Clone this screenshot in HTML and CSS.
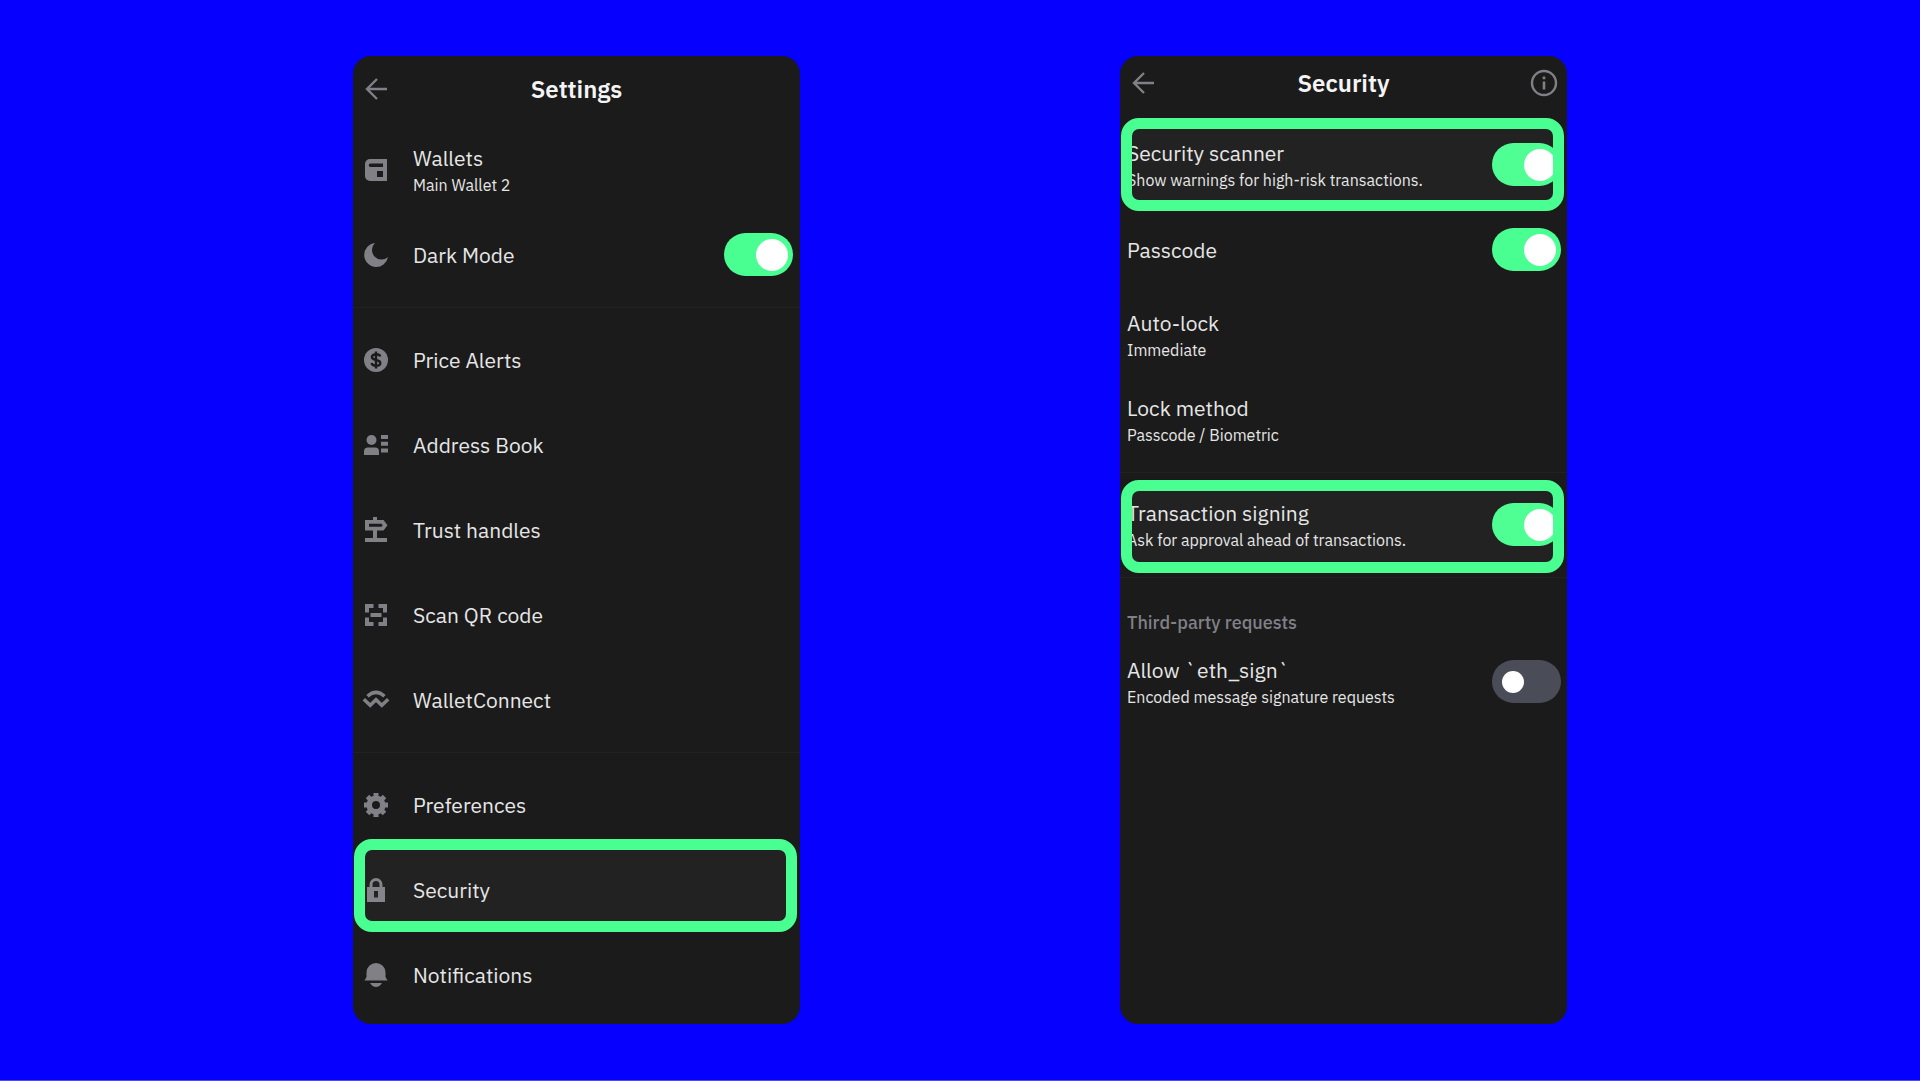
FILE: index.html
```html
<!DOCTYPE html>
<html lang="en">
<head>
<meta charset="utf-8">
<meta name="viewport" content="width=device-width, initial-scale=1">
<title>Wallet settings</title>
<link rel="stylesheet" href="styles.css">
</head>
<body>
<main class="stage">
  <section class="panel" aria-labelledby="settings-title">
    <header class="bar bar-tall">
      <button class="icon-button" type="button" aria-label="Back">
        <svg class="icon" viewBox="0 0 26 26"><path class="line" d="M24 13H4M14 3 4 13l10 10"/></svg>
      </button>
      <h1 class="title" id="settings-title">Settings</h1>
    </header>
    <ul class="list">
      <li class="row">
        <svg class="icon" viewBox="0 0 26 26"><path fill-rule="evenodd" d="M7 2h17v22H7a5 5 0 0 1-5-5V7a5 5 0 0 1 5-5zM7.500 6.500a1.500 1.500 0 0 0 0 3.500h12.500V6.500zM14 14v6h6v-6z"/></svg>
        <a class="text" href="#wallets"><span class="label">Wallets</span><span class="note">Main Wallet 2</span></a>
      </li>
      <li class="row">
        <svg class="icon" viewBox="0 0 26 26"><path d="M12 1A12 12 0 1 0 25 15 9.500 9.500 0 0 1 12 1z"/></svg>
        <label class="text" for="dark-mode"><span class="label">Dark Mode</span></label>
        <input class="toggle" type="checkbox" id="dark-mode" checked>
      </li>
    </ul>
    <hr class="divider">
    <ul class="list">
      <li class="row">
        <svg class="icon" viewBox="0 0 26 26"><circle cx="13" cy="13" r="12"/><path class="cut" d="M17.200 9.600C16.800 7.900 15.200 7.300 13 7.300c-2.400 0-4.100.9-4.100 2.700 0 4.200 8.400 1.700 8.400 6 0 1.900-1.900 2.800-4.300 2.800-2.500 0-4.100-.9-4.500-2.700M13 4.500v17"/></svg>
        <a class="text" href="#alerts"><span class="label">Price Alerts</span></a>
      </li>
      <li class="row">
        <svg class="icon" viewBox="0 0 26 26"><circle cx="8.500" cy="8" r="5"/><path d="M5 15.500h7a4 4 0 0 1 4 4V23H1v-3.500a4 4 0 0 1 4-4zM18 3h7v4h-7zM18 9.700h7v4h-7zM18 16.400h7v4h-7z"/></svg>
        <a class="text" href="#address-book"><span class="label">Address Book</span></a>
      </li>
      <li class="row">
        <svg class="icon" viewBox="0 0 26 26"><path fill-rule="evenodd" d="M10 0h4v3h6.500l4 5.200-4 5.200H14V21h10v4H2v-4h8v-7.600H2V3h8zM6 6.700v3h12.500l1.200-1.500-1.200-1.500z"/></svg>
        <a class="text" href="#handles"><span class="label">Trust handles</span></a>
      </li>
      <li class="row">
        <svg class="icon" viewBox="0 0 26 26"><path d="M2 2h8.500v4H6v4.500H2zM15.500 2H24v8.500h-4V6h-4.500zM2 15.500h4V20h4.500v4H2zM20 15.500h4V24h-8.500v-4H20zM7.500 11h11v4h-11z"/></svg>
        <a class="text" href="#scan"><span class="label">Scan QR code</span></a>
      </li>
      <li class="row">
        <svg class="icon" viewBox="0 0 26 26"><path class="wave" d="M4.500 9.200Q13 1.500 21.500 9.200M.8 12.200l6.400 6.100 5.800-5.600 5.800 5.600 6.400-6.100"/></svg>
        <a class="text" href="#walletconnect"><span class="label">WalletConnect</span></a>
      </li>
    </ul>
    <hr class="divider">
    <ul class="list">
      <li class="row">
        <svg class="icon" viewBox="0 0 26 26"><circle class="gear" cx="13" cy="13" r="6.800"/><path class="teeth" d="M13 1v4M13 21v4M1 13h4M21 13h4M4.500 4.500l3 3M18.500 18.500l3 3M4.500 21.500l3-3M18.500 7.500l3-3"/></svg>
        <a class="text" href="#preferences"><span class="label">Preferences</span></a>
      </li>
      <li class="row marked marked-up">
        <svg class="icon" viewBox="0 0 26 26"><path fill-rule="evenodd" d="M4 10h2.500V7.500a6.500 6.500 0 0 1 13 0V10H22v15H4zM9.500 10h7V7.500a3.500 3.500 0 0 0-7 0zM11 14v6.500h4V14z"/></svg>
        <a class="text" href="#security"><span class="label">Security</span></a>
      </li>
      <li class="row">
        <svg class="icon" viewBox="0 0 26 26"><path d="M13 1a9.500 9.500 0 0 1 9.500 9.500V15l2 3.500h-23l2-3.500v-4.500A9.500 9.500 0 0 1 13 1zM7 21h12q-2.500 4-6 4t-6-4z"/></svg>
        <a class="text" href="#notifications"><span class="label">Notifications</span></a>
      </li>
    </ul>
  </section>

  <section class="panel panel-security" aria-labelledby="security-title">
    <header class="bar">
      <button class="icon-button" type="button" aria-label="Back">
        <svg class="icon" viewBox="0 0 26 26"><path class="line" d="M24 13H4M14 3 4 13l10 10"/></svg>
      </button>
      <h2 class="title" id="security-title">Security</h2>
      <button class="icon-button" type="button" aria-label="About security">
        <svg class="icon" viewBox="0 0 26 26"><circle class="line" cx="13" cy="13" r="12"/><path d="M11.700 6.500h2.600v2.700h-2.600zM11.700 11.500h2.600v8h-2.600z"/></svg>
      </button>
    </header>
    <ul class="list">
      <li class="row marked">
        <label class="text" for="scanner"><span class="label">Security scanner</span><span class="note">Show warnings for high-risk transactions.</span></label>
        <input class="toggle" type="checkbox" id="scanner" checked>
      </li>
      <li class="row">
        <label class="text" for="passcode"><span class="label">Passcode</span></label>
        <input class="toggle" type="checkbox" id="passcode" checked>
      </li>
      <li class="row">
        <a class="text" href="#auto-lock"><span class="label">Auto-lock</span><span class="note">Immediate</span></a>
      </li>
      <li class="row">
        <a class="text" href="#lock-method"><span class="label">Lock method</span><span class="note">Passcode / Biometric</span></a>
      </li>
    </ul>
    <hr class="divider">
    <ul class="list">
      <li class="row marked marked-down">
        <label class="text" for="signing"><span class="label">Transaction signing</span><span class="note">Ask for approval ahead of transactions.</span></label>
        <input class="toggle" type="checkbox" id="signing" checked>
      </li>
    </ul>
    <hr class="divider">
    <h3 class="group">Third-party requests</h3>
    <ul class="list">
      <li class="row">
        <label class="text" for="eth-sign"><span class="label">Allow `eth_sign`</span><span class="note">Encoded message signature requests</span></label>
        <input class="toggle" type="checkbox" id="eth-sign">
      </li>
    </ul>
  </section>
</main>
</body>
</html>
```
FILE: styles.css
```css
* {
  box-sizing: border-box;
}

body {
  min-height: 100vh;
  margin: 0;
  border-bottom: 1px solid #4a4aff;
  background: #0500ff;
  color: #e6e6e6;
  font-family: "IBM Plex Sans", Roboto, sans-serif;
}

.stage {
  display: flex;
  justify-content: center;
  gap: 320px;
  padding: 56px 24px 55px;
}

.panel {
  flex: 0 1 447px;
  padding-bottom: 7px;
  border-radius: 18px;
  background: #1b1b1b;
}

.bar {
  display: grid;
  grid-template-columns: 26px 1fr 26px;
  align-items: center;
  height: 54px;
  margin: 0 10px 12px;
}

.bar-tall {
  height: 66px;
  margin-bottom: 5px;
}

.title {
  margin: 0;
  color: #f4f4f4;
  font-size: 24px;
  font-weight: 600;
  line-height: 32px;
  text-align: center;
}

.icon-button {
  display: flex;
  padding: 0;
  border: 0;
  background: none;
}

.icon {
  flex: none;
  width: 26px;
  height: 26px;
  fill: #818087;
  overflow: visible;
}

.icon .line,
.icon .wave,
.icon .gear,
.icon .teeth {
  fill: none;
  stroke: #818087;
  stroke-width: 2.4;
}

.icon .wave {
  stroke-width: 3.4;
}

.icon .gear {
  stroke-width: 5.6;
}

.icon .teeth {
  stroke-width: 5;
}

.icon .cut {
  fill: none;
  stroke: #1b1b1b;
  stroke-width: 2.4;
}

.list {
  margin: 0;
  padding: 0;
  list-style: none;
}

.row {
  position: relative;
  display: flex;
  align-items: center;
  gap: 24px;
  height: 85px;
  padding: 0 7px;
}

.panel-security .row {
  padding-right: 6px;
}

.row .icon {
  margin-left: 3px;
}

.text {
  flex: 1;
  display: flex;
  flex-direction: column;
  color: inherit;
  text-decoration: none;
}

.text:has(.note) {
  padding-top: 2px;
}

.label {
  font-size: 21px;
  line-height: 28px;
}

.note {
  font-size: 16px;
  line-height: 26px;
}

.toggle {
  appearance: none;
  display: flex;
  align-items: center;
  flex: none;
  width: 69px;
  height: 43px;
  margin: 0;
  padding: 0 10px;
  border-radius: 22px;
  background: #4a4c58;
}

.toggle::before {
  content: "";
  width: 22px;
  height: 22px;
  border-radius: 50%;
  background: #fff;
}

.toggle:checked {
  justify-content: flex-end;
  padding: 0 5px;
  background: #4aff91;
}

.toggle:checked::before {
  width: 32px;
  height: 32px;
}

.marked::after {
  content: "";
  position: absolute;
  inset: -4px 3px -4px 1px;
  border: 11px solid #4aff91;
  border-radius: 18px;
  background: rgb(255 255 255 / 3%);
  pointer-events: none;
}

.marked-up::after {
  inset: -8px 3px 0 1px;
}

.marked-down::after {
  inset: -2px 3px -6px 1px;
}

.divider {
  height: 1px;
  margin: 10px 0 9px;
  border: 0;
  background: #222;
}

.group {
  margin: 0;
  padding: 20px 7px 0;
  color: #818087;
  font-size: 18px;
  font-weight: 500;
  line-height: 32px;
}

@media (max-width: 1300px) {
  .stage {
    flex-wrap: wrap;
    gap: 56px;
  }
}
```
